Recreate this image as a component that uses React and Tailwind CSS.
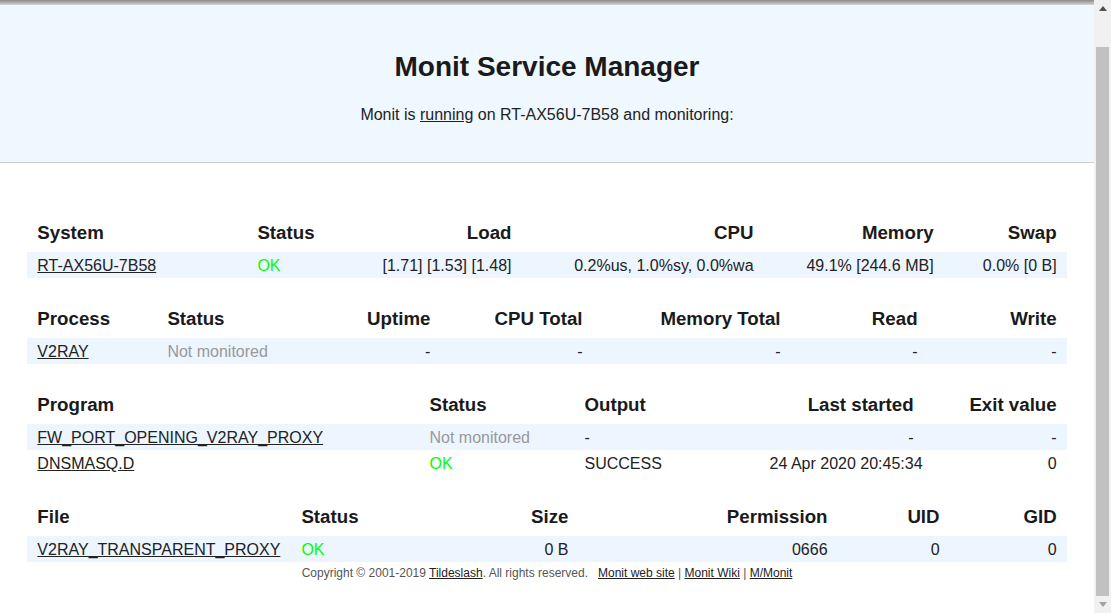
import React from 'react';

const systemCols = [220, 122, 152, 242, 180, 123];
const processCols = [130, 142, 141, 152, 198, 137, 139];
const programCols = [392, 155, 185, 164, 143];
const fileCols = [264, 128, 159, 259, 112, 117];

const Link = ({ children }) => (
  <a href="#" className="underline text-[#222]">
    {children}
  </a>
);

const Ok = () => <span className="text-[#00ff00]">OK</span>;
const Gray = ({ children }) => <span className="text-[#999]">{children}</span>;

// rows: array of cells, align: 'l' or 'r' per column
const ServiceTable = ({ cols, heads, align, rows, last }) => (
  <table className={`w-[95%] mx-auto table-fixed border-collapse ${last ? '' : 'mb-[27px]'}`}>
    <colgroup>
      {cols.map((w, i) => (
        <col key={i} style={{ width: w }} />
      ))}
    </colgroup>
    <thead>
      <tr>
        {heads.map((h, i) => (
          <th
            key={h}
            className={`px-[10px] pt-[2px] pb-[7px] font-bold text-[18.7px] leading-[24px] text-[#1a1a1a] ${
              align[i] === 'r' ? 'text-right' : 'text-left'
            }`}
          >
            {h}
          </th>
        ))}
      </tr>
    </thead>
    <tbody>
      {rows.map((row, r) => (
        <tr key={r} className={r % 2 === 0 ? 'bg-[#edf5ff]' : ''}>
          {row.map((cell, i) => (
            <td
              key={i}
              className={`px-[10px] h-[26px] pt-[2px] text-[16px] leading-[24px] text-[#222] whitespace-nowrap ${
                align[i] === 'r' ? 'text-right' : 'text-left'
              }`}
            >
              {cell}
            </td>
          ))}
        </tr>
      ))}
    </tbody>
  </table>
);

const Scrollbar = () => (
  <div className="w-[17px] h-full bg-[#f1f1f1] flex flex-col">
    <div className="h-[17px] flex items-center justify-center">
      <svg width="8" height="5" viewBox="0 0 8 5">
        <path d="M4 0 L8 5 L0 5 Z" fill="#505050" />
      </svg>
    </div>
    <div className="h-[30px]" />
    <div className="mx-[2px] h-[549px] bg-[#c1c1c1]" />
    <div className="flex-1 flex items-center justify-center">
      <svg width="8" height="5" viewBox="0 0 8 5">
        <path d="M0 0 L8 0 L4 5 Z" fill="#a3a3a3" />
      </svg>
    </div>
  </div>
);

export default function App() {
  return (
    <div className="flex h-[613px] w-[1111px] overflow-hidden bg-white font-['Liberation_Sans',Arial,sans-serif]">
      <div className="flex-1 flex flex-col">
        <div className="h-[5px] bg-gradient-to-b from-[#8c8c8c] to-[#d6d6d6]" />
        <div className="bg-[#eff7ff] border-b border-[#cccccc] pt-[46px] h-[158px] text-center text-[#222]">
          <h1 className="text-[28px] leading-[32px] font-bold text-[#1a1a1a]">Monit Service Manager</h1>
          <p className="mt-[22px] text-[16px] leading-[20px]">
            Monit is <a href="#" className="underline">running</a> on RT-AX56U-7B58 and monitoring:
          </p>
        </div>

        <div className="pt-[56px]">
          <ServiceTable
            cols={systemCols}
            heads={['System', 'Status', 'Load', 'CPU', 'Memory', 'Swap']}
            align={['l', 'l', 'r', 'r', 'r', 'r']}
            rows={[
              [
                <Link>RT-AX56U-7B58</Link>,
                <Ok />,
                '[1.71] [1.53] [1.48]',
                '0.2%us, 1.0%sy, 0.0%wa',
                '49.1% [244.6 MB]',
                '0.0% [0 B]'
              ]
            ]}
          />
          <ServiceTable
            cols={processCols}
            heads={['Process', 'Status', 'Uptime', 'CPU Total', 'Memory Total', 'Read', 'Write']}
            align={['l', 'l', 'r', 'r', 'r', 'r', 'r']}
            rows={[[<Link>V2RAY</Link>, <Gray>Not monitored</Gray>, '-', '-', '-', '-', '-']]}
          />
          <ServiceTable
            cols={programCols}
            heads={['Program', 'Status', 'Output', 'Last started', 'Exit value']}
            align={['l', 'l', 'l', 'r', 'r']}
            rows={[
              [<Link>FW_PORT_OPENING_V2RAY_PROXY</Link>, <Gray>Not monitored</Gray>, '-', '-', '-'],
              [<Link>DNSMASQ.D</Link>, <Ok />, 'SUCCESS', '24 Apr 2020 20:45:34', '0']
            ]}
          />
          <ServiceTable
            last
            cols={fileCols}
            heads={['File', 'Status', 'Size', 'Permission', 'UID', 'GID']}
            align={['l', 'l', 'r', 'r', 'r', 'r']}
            rows={[[<Link>V2RAY_TRANSPARENT_PROXY</Link>, <Ok />, '0 B', '0666', '0', '0']]}
          />

          <p className="mt-[3px] text-center text-[12px] leading-[16px] text-[#555]">
            Copyright © 2001-2019 <a href="#" className="underline text-[#222]">Tildeslash</a>. All rights reserved.
            <span className="inline-block w-[10px]" />
            <a href="#" className="underline text-[#222]">Monit web site</a> |{' '}
            <a href="#" className="underline text-[#222]">Monit Wiki</a> |{' '}
            <a href="#" className="underline text-[#222]">M/Monit</a>
          </p>
        </div>
      </div>
      <Scrollbar />
    </div>
  );
}
